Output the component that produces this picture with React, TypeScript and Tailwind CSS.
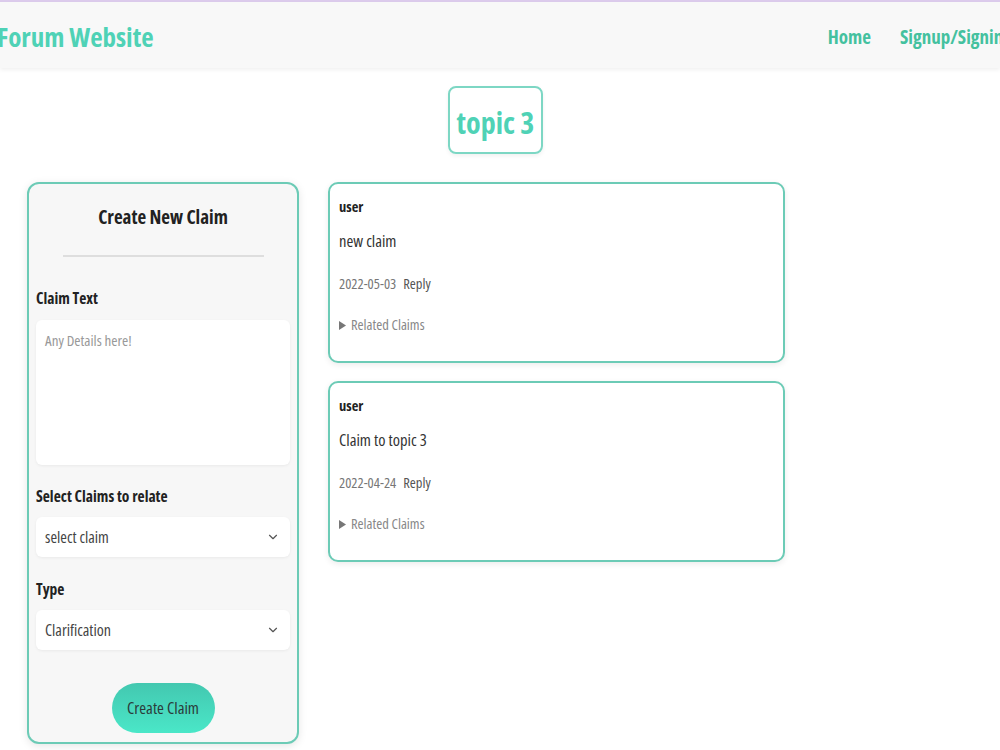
import { ChevronDown } from 'lucide-react';

const claims = [
  { user: 'user', text: 'new claim', date: '2022-05-03' },
  { user: 'user', text: 'Claim to topic 3', date: '2022-04-24' },
];

const SelectBox = ({ value }: { value: string }) => (
  <div className="h-[40px] bg-white rounded-md shadow-[0_1px_3px_rgba(0,0,0,0.06)] flex items-center justify-between pl-[9px] pr-[10px]">
    <span className="text-[16px] text-[#444]">{value}</span>
    <ChevronDown className="w-[14px] h-[14px] text-[#555]" strokeWidth={2} />
  </div>
);

const ClaimCard = ({ user, text, date }: { user: string; text: string; date: string }) => (
  <div className="h-[181px] bg-white border-2 border-[#6ccbb6] rounded-[10px] shadow-[0_2px_6px_rgba(0,0,0,0.08)] pl-[9px] pt-[13px]">
    <div className="text-[14.5px] leading-[20px] font-bold text-[#222]">{user}</div>
    <div className="mt-[13px] text-[16.5px] leading-[22px] text-[#333]">{text}</div>
    <div className="mt-[22px] text-[14.5px] leading-[20px] text-[#777] flex gap-[7px]">
      <span>{date}</span>
      <span className="text-[#555] font-medium">Reply</span>
    </div>
    <div className="mt-[22px] flex items-center gap-[5px] text-[14.5px] leading-[18px] text-[#888]">
      <svg width="7" height="9" viewBox="0 0 7 9">
        <polygon points="0,0 7,4.5 0,9" fill="#777" />
      </svg>
      <span>Related Claims</span>
    </div>
  </div>
);

export default function App() {
  return (
    <div className="min-h-screen bg-white overflow-hidden font-['Open_Sans',sans-serif] font-stretch-condensed">
      <div className="h-[2px] bg-[#dccbec]" />

      {/* Navbar */}
      <nav className="h-[66px] pt-[4px] bg-[#f8f8f8] shadow-[0_2px_4px_rgba(0,0,0,0.06)] flex items-center">
        <span className="-ml-[3px] text-[27px] font-bold text-[#4fd2b6] whitespace-nowrap">Forum Website</span>
        <div className="ml-auto -mr-[40px] flex gap-[29px] whitespace-nowrap text-[19px] font-bold text-[#44c19f]">
          <span>Home</span>
          <span className="w-[140px]">Signup/Signin</span>
        </div>
      </nav>

      {/* Topic title */}
      <div className="mt-[18px] flex justify-center pr-[9px]">
        <div className="h-[68px] px-[7px] pt-[4px] border-2 border-[#7dd7c4] rounded-lg shadow-[0_2px_4px_rgba(0,0,0,0.06)] flex items-center">
          <span className="text-[30px] font-bold text-[#4fd2b6]">topic 3</span>
        </div>
      </div>

      <div className="mt-[28px] flex gap-[29px] pl-[27px]">
        {/* Create claim form */}
        <div className="w-[272px] h-[562px] bg-[#f7f7f7] border-2 border-[#6ccbb6] rounded-xl shadow-[0_2px_8px_rgba(0,0,0,0.1)] px-[7px] pt-[19px]">
          <h2 className="text-center text-[19px] leading-[28px] font-bold text-[#222]">Create New Claim</h2>
          <hr className="mt-[24px] mx-auto w-[201px] border-t-2 border-[#dedede]" />

          <label className="block mt-[31px] text-[15.5px] leading-[20px] font-bold text-[#222]">Claim Text</label>
          <div className="mt-[12px] h-[145px] bg-white rounded-md shadow-[0_1px_3px_rgba(0,0,0,0.06)] px-[9px] pt-[8px]">
            <span className="text-[15px] text-[#999]">Any Details here!</span>
          </div>

          <label className="block mt-[21px] text-[15.5px] leading-[20px] font-bold text-[#222]">Select Claims to relate</label>
          <div className="mt-[11px]">
            <SelectBox value="select claim" />
          </div>

          <label className="block mt-[22px] text-[15.5px] leading-[20px] font-bold text-[#222]">Type</label>
          <div className="mt-[11px]">
            <SelectBox value="Clarification" />
          </div>

          <div className="mt-[33px] flex justify-center">
            <button className="w-[103px] h-[50px] rounded-full bg-gradient-to-b from-[#43c8b0] to-[#4ae7c8] text-[16.5px] text-[#2b3b3a]">
              Create Claim
            </button>
          </div>
        </div>

        {/* Claims list */}
        <div className="w-[457px] flex flex-col gap-[18px]">
          {claims.map((c, i) => (
            <ClaimCard key={i} {...c} />
          ))}
        </div>
      </div>
    </div>
  );
}
